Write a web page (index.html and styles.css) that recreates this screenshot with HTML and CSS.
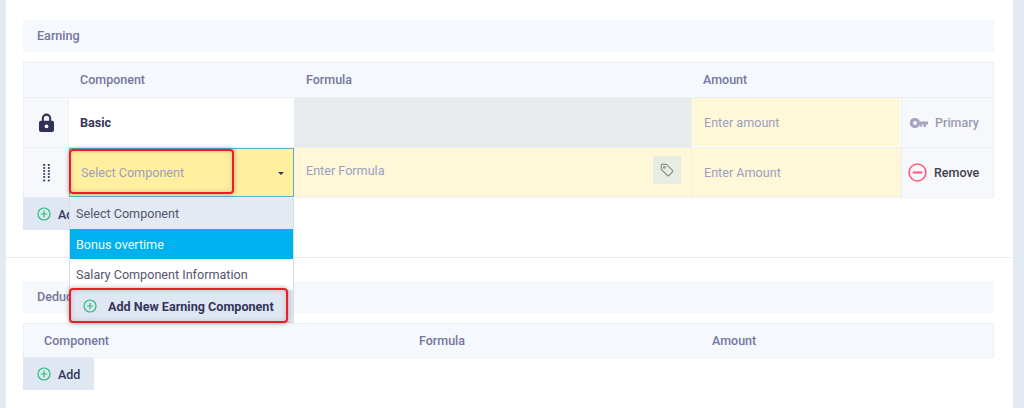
FILE: index.html
```html
<!DOCTYPE html>
<html lang="en">
<head>
<meta charset="utf-8">
<title>Salary components</title>
<link rel="stylesheet" href="styles.css">
</head>
<body>
<div class="page">
  <main class="panel">
    <section class="earning">
      <h2 class="band">Earning</h2>
      <div class="table">
        <div class="row head earn-cols">
          <div class="cell"></div>
          <div class="cell th">Component</div>
          <div class="cell th th-wide">Formula</div>
          <div class="cell th th-wide">Amount</div>
          <div class="cell"></div>
        </div>
        <div class="row body-row earn-cols">
          <div class="cell side center">
            <svg class="lock" viewBox="0 0 16 20" width="15" height="19"><path fill="#2f3157" d="M3 8V5.500a5 5 0 0 1 10 0V8h1a2 2 0 0 1 2 2v8a2 2 0 0 1-2 2H2a2 2 0 0 1-2-2v-8a2 2 0 0 1 2-2zm2.200 0h5.600V5.500a2.800 2.800 0 0 0-5.600 0z"/><circle cx="8" cy="14" r="2" fill="#fff"/></svg>
          </div>
          <div class="cell name">Basic</div>
          <div class="cell disabled"></div>
          <div class="cell yellow ph amount-one">Enter amount</div>
          <div class="cell side action primary">
            <svg viewBox="0 0 18 10" width="18" height="10"><path fill="#a3a5c2" d="M5 0a5 5 0 0 1 4.800 3.500H18v3h-2v2.500h-2.500V6.500h-1.500V8.500H9.600V6.500A5 5 0 1 1 5 0zm0 3a2 2 0 1 0 0 4 2 2 0 0 0 0-4z"/></svg>
            <span>Primary</span>
          </div>
        </div>
        <div class="row body-row earn-cols last">
          <div class="cell side center">
            <svg viewBox="0 0 7 18" width="7" height="18"><g fill="#34365a"><circle cx="1.200" cy="1" r="1.100"/><circle cx="1.200" cy="4" r="1.100"/><circle cx="1.200" cy="7" r="1.100"/><circle cx="1.200" cy="10" r="1.100"/><circle cx="1.200" cy="13" r="1.100"/><circle cx="1.200" cy="16.500" r="1.100"/><circle cx="5.800" cy="1" r="1.100"/><circle cx="5.800" cy="4" r="1.100"/><circle cx="5.800" cy="7" r="1.100"/><circle cx="5.800" cy="10" r="1.100"/><circle cx="5.800" cy="13" r="1.100"/><circle cx="5.800" cy="16.500" r="1.100"/></g></svg>
          </div>
          <div class="cell select">
            <span>Select Component</span>
            <i class="caret"></i>
          </div>
          <div class="cell yellow ph formula">
            <span>Enter Formula</span>
            <span class="tag">
              <svg viewBox="0 0 16 16" width="14" height="14" fill="none" stroke="#8a8c90" stroke-width="1.300" stroke-linejoin="round"><path d="M1.500 2.500a1 1 0 0 1 1-1h4.800l7 7a1.200 1.200 0 0 1 0 1.700l-4.100 4.100a1.200 1.200 0 0 1-1.700 0l-7-7z"/><circle cx="5" cy="5" r="1"/></svg>
            </span>
          </div>
          <div class="cell yellow ph">Enter Amount</div>
          <div class="cell side action remove">
            <svg viewBox="0 0 18 18" width="19" height="19" fill="none" stroke="#ff5c7c" stroke-width="1.500"><circle cx="9" cy="9" r="8"/><path d="M4.500 9h9" stroke-width="2"/></svg>
            <span>Remove</span>
          </div>
        </div>
      </div>
      <button class="add" type="button">
        <svg class="plus" viewBox="0 0 14 14" width="14" height="14" fill="none" stroke="#2dbb7f" stroke-width="1.200"><circle cx="7" cy="7" r="6"/><path d="M7 3.800v6.400M3.800 7h6.400"/></svg>
        <span>Add</span>
      </button>
      <div class="menu">
        <div class="opt opt-first">Select Component</div>
        <div class="opt opt-active">Bonus overtime</div>
        <div class="opt opt-plain">Salary Component Information</div>
        <div class="opt opt-new">
          <svg class="plus" viewBox="0 0 14 14" width="14" height="14" fill="none" stroke="#2dbb7f" stroke-width="1.200"><circle cx="7" cy="7" r="6"/><path d="M7 3.800v6.400M3.800 7h6.400"/></svg>
          <span>Add New Earning Component</span>
        </div>
      </div>
      <div class="mark mark-select"></div>
      <div class="mark mark-new"></div>
    </section>
    <section class="deduction">
      <h2 class="band">Deduction</h2>
      <div class="table">
        <div class="row head ded-head ded-cols">
          <div class="cell th ded-first">Component</div>
          <div class="cell th">Formula</div>
          <div class="cell th">Amount</div>
        </div>
      </div>
      <button class="add" type="button">
        <svg class="plus" viewBox="0 0 14 14" width="14" height="14" fill="none" stroke="#2dbb7f" stroke-width="1.200"><circle cx="7" cy="7" r="6"/><path d="M7 3.800v6.400M3.800 7h6.400"/></svg>
        <span>Add</span>
      </button>
    </section>
  </main>
</div>
</body>
</html>
```

FILE: styles.css
```css
* { box-sizing: border-box; }
html, body { margin: 0; padding: 0; height: 100%; overflow: hidden; }
body { background: #e4eaf3; font-family: Roboto, "Liberation Sans", sans-serif; font-size: 12.6px; color: #34365a; }
.page { height: 408px; padding: 0 11px 0 6px; }
.panel { position: relative; background: #fff; height: 408px; }
.earning { position: relative; padding: 20px 19px 27px 17px; border-bottom: 1px solid #e9edf3; height: 258px; }
.deduction { padding: 23px 19px 0 17px; }
.band { margin: 0; height: 32px; background: #f5f8fc; padding-left: 14px; font-size: 12.6px; font-weight: 500; line-height: 31px; color: #7476a0; }
.table { margin-top: 10px; border: 1px solid #eceff5; border-bottom: 0; }
.row { display: grid; }
.earn-cols { grid-template-columns: 45px 225px 397px 210px 92px; }
.ded-cols { grid-template-columns: 384px 293px 292px; }
.head { height: 35px; background: #f5f8fc; border-bottom: 1px solid #eceff5; }
.ded-head { height: 34px; }
.body-row { height: 50px; border-bottom: 1px solid #eceff5; }
.cell { display: flex; align-items: center; min-width: 0; }
.th { font-size: 12.5px; font-weight: 500; color: #7476a0; padding-left: 11px; padding-bottom: 1px; }
.th-wide { padding-left: 12px; }
.ded-first { padding-left: 20px; }
.side { background: #f6f8fb; }
.center { justify-content: center; border-right: 1px solid #eceff5; }
.name { font-size: 12.6px; font-weight: 700; padding-left: 11px; }
.disabled { background: #e7ebee; }
.yellow { background: #fef7d8; border-left: 1px solid #f3f1e2; }
.ph { color: #9d9fc0; font-size: 12.6px; padding-left: 12px; }
.amount-one { border-bottom: 1px solid #fff; border-right: 1px solid #fff; }
.formula { justify-content: space-between; padding-left: 11px; padding-right: 10px; padding-bottom: 5px; }
.tag { width: 28px; height: 28px; background: #e9ece2; display: flex; align-items: center; justify-content: center; }
.select { position: relative; background: #ffef9f; border: 1px solid #55b6c9; padding-left: 11px; color: #9d9fc0; justify-content: space-between; padding-right: 9px; }
.caret { width: 0; height: 0; border-left: 3px solid transparent; border-right: 3px solid transparent; border-top: 3.5px solid #33354f; margin-top: 2px; }
.action { gap: 7px; padding-left: 6px; font-size: 12.5px; font-weight: 500; border-left: 1px solid #eceff5; }
.primary { color: #9a9bb0; padding-left: 8px; }
.remove { color: #3e3f4c; }
.add { display: flex; align-items: center; gap: 7px; width: 71px; height: 32px; padding: 0 0 0 14px; border: 0; background: #dfe7f2; font: 500 12.5px Roboto, "Liberation Sans", sans-serif; color: #34365a; }
.menu { position: absolute; left: 63px; top: 198px; width: 225px; height: 125px; background: #fff; border: 1px solid #d8dce4; border-top: 0; font-size: 12.6px; color: #55566e; }
.opt { display: flex; align-items: center; padding-left: 6px; }
.opt-first { height: 31px; background: #e3eaf4; }
.opt-active { height: 30px; background: #00b1f0; color: #f2fbff; }
.opt-plain { height: 31px; }
.opt-new { height: 32px; background: #dfe7f2; gap: 11px; padding-left: 13px; font-weight: 700; font-size: 12.6px; color: #34365a; }
.mark { position: absolute; border: 2px solid #ee1c25; border-radius: 4px; box-shadow: 0 0 5px rgba(60,60,60,.45), inset 0 0 5px rgba(60,60,60,.2); pointer-events: none; }
.mark-select { left: 63px; top: 149px; width: 165px; height: 45px; }
.mark-new { left: 63px; top: 288px; width: 219px; height: 35px; }
```
